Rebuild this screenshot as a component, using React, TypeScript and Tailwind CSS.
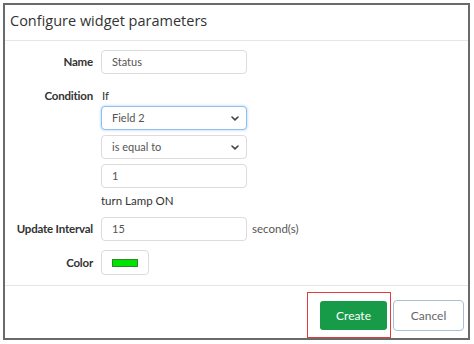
import React from 'react';

const lato = { fontFamily: 'Lato, "Open Sans", sans-serif' };

function Chevron() {
  return (
    <svg width="8" height="5" viewBox="0 0 8 5" className="text-[#444]">
      <path d="M1 1 L4 3.9 L7 1" fill="none" stroke="currentColor" strokeWidth="1.6" strokeLinecap="round" />
    </svg>
  );
}

function Field({ value, focus, select }: { value: string; focus?: boolean; select?: boolean }) {
  return (
    <div
      className={`w-[146px] h-[24px] flex items-center justify-between pl-[10px] pr-[7px] rounded-[4px] bg-white border text-[11px] text-[#555] ${
        focus ? 'border-[#8ec0ee] shadow-[0_0_3px_rgba(100,160,230,0.55)]' : 'border-[#dcdcdc]'
      }`}
    >
      <span>{value}</span>
      {select && <Chevron />}
    </div>
  );
}

export default function App() {
  return (
    <div className="w-[474px] h-[344px] bg-white pt-[3px] pl-[3px]" style={lato}>
      <div className="w-[467px] h-[337px] border-2 border-[#6a6a6a] flex flex-col overflow-hidden">
        <div className="h-[36px] shrink-0 border-b border-[#e6e6e6] flex items-center pl-[5px] pb-[4px]">
          <h1 className="text-[14.5px] text-[#333]" style={{ fontFamily: '"Open Sans", sans-serif' }}>
            Configure widget parameters
          </h1>
        </div>

        <div className="flex flex-col text-[11.5px] text-[#333] whitespace-nowrap">
          {/* Name */}
          <div className="flex items-center mt-[9px]">
            <label className="w-[88px] text-right font-bold tracking-[-0.2px]">Name</label>
            <div className="ml-[8px]">
              <Field value="Status" />
            </div>
          </div>

          {/* Condition */}
          <div className="flex mt-[13px]">
            <label className="w-[88px] text-right font-bold tracking-[-0.2px] leading-[18px]">Condition</label>
            <div className="ml-[8px] flex flex-col">
              <span className="leading-[18px] pl-[1px]">If</span>
              <div className="mt-[1px] flex flex-col gap-[5px]">
                <Field value="Field 2" focus select />
                <Field value="is equal to" select />
                <Field value="1" />
              </div>
              <span className="mt-[4px] leading-[18px]">turn Lamp ON</span>
            </div>
          </div>

          {/* Update interval */}
          <div className="flex items-center mt-[7px]">
            <label className="w-[88px] text-right font-bold tracking-[-0.2px]">Update Interval</label>
            <div className="ml-[8px] flex items-center gap-[5px]">
              <Field value="15" />
              <span className="text-[#555]">second(s)</span>
            </div>
          </div>

          {/* Color */}
          <div className="flex items-center mt-[9px]">
            <label className="w-[88px] text-right font-bold tracking-[-0.2px]">Color</label>
            <div className="ml-[8px] w-[48px] h-[25px] rounded-[4px] border border-[#dcdcdc] flex items-center justify-center">
              <div className="w-[26px] h-[8px] bg-[#00e400] border border-[#2a8a2a]" />
            </div>
          </div>
        </div>

        <div className="mt-[10px] border-t border-[#e6e6e6] relative flex-1 flex justify-end items-start pt-[15px] pr-[4px] gap-[6px]">
          <button className="w-[67px] h-[29px] rounded-[3px] bg-[#179b48] text-white text-[12px]">Create</button>
          <button className="w-[71px] h-[31px] -mt-[1px] rounded-[4px] border border-[#a8bfd4] text-[#666] text-[12px] bg-white">
            Cancel
          </button>
          <div className="absolute left-[302px] top-[6px] w-[84px] h-[46px] border-[1.5px] border-[#e23b3b] pointer-events-none" />
        </div>
      </div>
    </div>
  );
}
